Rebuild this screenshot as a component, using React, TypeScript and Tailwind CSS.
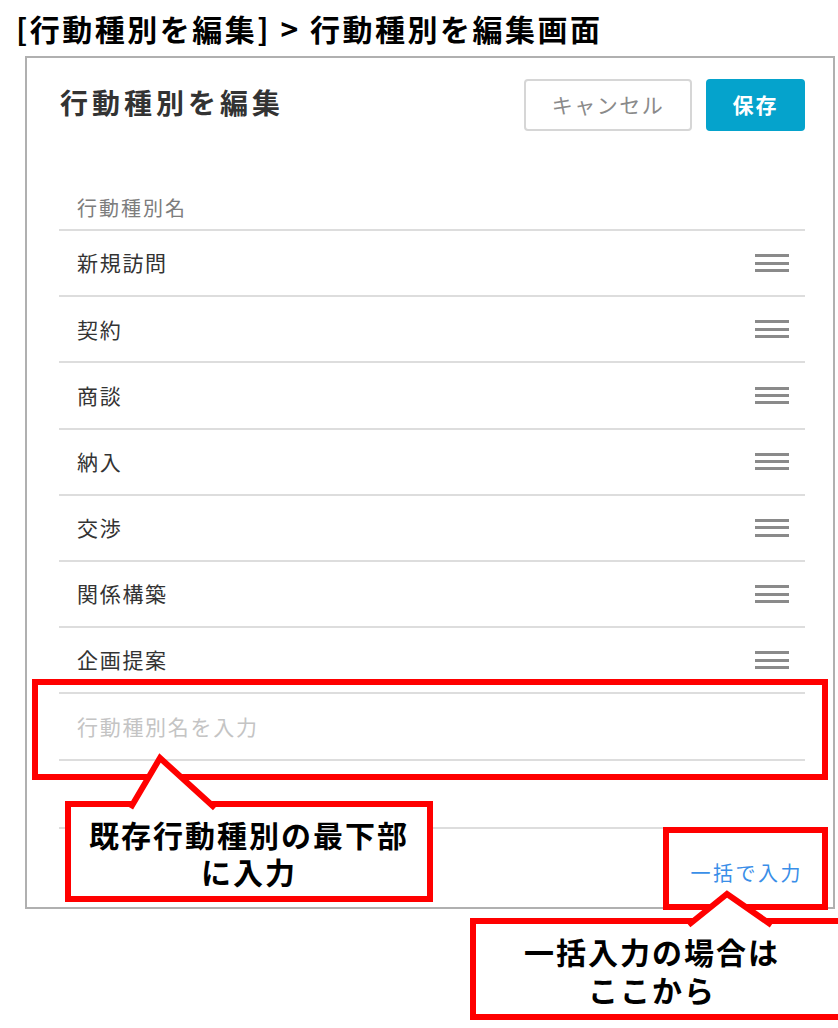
const FONT = '"Noto Sans CJK JP", "Noto Sans", sans-serif'

const kinds = ['新規訪問', '契約', '商談', '納入', '交渉', '関係構築', '企画提案']

function DragHandle() {
  return (
    <span className="flex flex-col gap-[4.3px]" aria-hidden>
      <span className="block h-[3px] w-[34px] bg-[#8a8a8a]" />
      <span className="block h-[3px] w-[34px] bg-[#8a8a8a]" />
      <span className="block h-[3px] w-[34px] bg-[#8a8a8a]" />
    </span>
  )
}

function Callouts() {
  return (
    <>
      {/* 入力欄を囲む枠 */}
      <div className="pointer-events-none absolute left-[32px] top-[679px] h-[101px] w-[796px] border-[6px] border-[#ff0000]" />
      {/* 一括で入力を囲む枠 */}
      <div className="pointer-events-none absolute left-[663px] top-[827px] h-[83px] w-[165px] border-[6px] border-[#ff0000]" />

      <div className="absolute left-[65px] top-[801px] flex h-[101px] w-[368px] flex-col items-center justify-center border-[6px] border-[#ff0000] bg-white pt-[2px] text-center text-[30px] font-bold leading-[37px] tracking-[2px] text-black">
        <span>既存行動種別の最下部</span>
        <span>に入力</span>
      </div>

      <div className="absolute left-[470px] top-[918px] flex h-[102px] w-[368px] flex-col items-center justify-center border-[6px] border-r-0 border-[#ff0000] bg-white pr-[10px] pt-[2px] text-center text-[30px] font-bold leading-[38px] tracking-[2px] text-black">
        <span>一括入力の場合は</span>
        <span>ここから</span>
      </div>

      <svg className="pointer-events-none absolute left-0 top-0" width={838} height={1028}>
        <polyline
          points="130.5,808 160,758 215,808"
          fill="#ffffff"
          stroke="#ff0000"
          strokeWidth={6}
          strokeLinejoin="miter"
        />
        <polyline
          points="688.5,925 727,894 771.5,925"
          fill="#ffffff"
          stroke="#ff0000"
          strokeWidth={6}
          strokeLinejoin="miter"
        />
      </svg>
    </>
  )
}

export default function App() {
  return (
    <div className="relative h-[1028px] w-[838px] overflow-hidden bg-white" style={{ fontFamily: FONT }}>
      <h1 className="pl-[16px] pt-[10px] text-[30px] font-bold leading-[36px] tracking-[2.5px] text-black">
        [行動種別を編集] &gt; 行動種別を編集画面
      </h1>

      <section className="ml-[25px] mt-[10px] flex h-[853px] w-[810px] flex-col border-2 border-[#b0b0b0] pl-[32px] pr-[28px]">
        <header className="mt-[21px] flex h-[52px] items-center justify-between">
          <h2 className="pb-[6px] pl-[1px] text-[28px] font-bold tracking-[4px] text-[#333333]">
            行動種別を編集
          </h2>
          <div className="flex gap-[14px]">
            <button
              type="button"
              className="h-[52px] w-[168px] rounded-[4px] border-2 border-[#d6d6d6] bg-white text-[21px] tracking-[1.5px] text-[#8a8a8a]"
            >
              キャンセル
            </button>
            <button
              type="button"
              className="h-[52px] w-[99px] rounded-[4px] bg-[#05a3cc] text-[21px] font-bold tracking-[2px] text-white"
            >
              保存
            </button>
          </div>
        </header>

        <div className="mt-[56px] flex h-[44px] items-center border-b-2 border-[#dddddd] pl-[18px] text-[20px] tracking-[2px] text-[#7d7d7d]">
          行動種別名
        </div>

        <ul>
          {kinds.map((kind) => (
            <li
              key={kind}
              className="flex h-[66.2px] items-center justify-between border-b-2 border-[#dddddd] pl-[18px] pr-[16px] text-[21px] tracking-[1.7px] text-[#333333]"
            >
              <span>{kind}</span>
              <DragHandle />
            </li>
          ))}
        </ul>

        <div className="flex h-[66.2px] items-center border-b-2 border-[#dddddd] pl-[18px]">
          <input
            type="text"
            placeholder="行動種別名を入力"
            className="w-full bg-transparent text-[21px] tracking-[1.7px] text-[#333333] outline-none placeholder:text-[#c4c4c4]"
          />
        </div>

        <div className="h-[68px] border-b-2 border-[#dddddd]" />

        <div className="flex flex-1 items-center justify-end pr-[2px] pt-[10px]">
          <a className="text-[20px] tracking-[2.5px] text-[#3a8ee8]">一括で入力</a>
        </div>
      </section>

      <Callouts />
    </div>
  )
}
